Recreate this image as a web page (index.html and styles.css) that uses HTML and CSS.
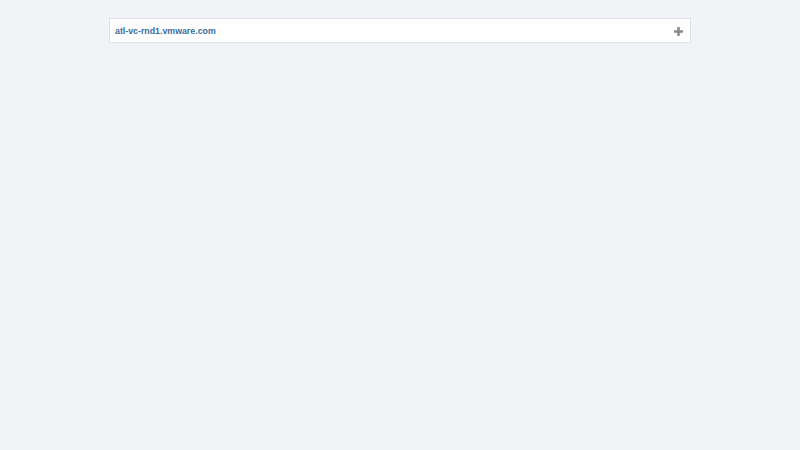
FILE: index.html
```html
<!DOCTYPE html>
<html>
<head>
<meta charset="utf-8">
<link rel="stylesheet" href="styles.css">
</head>
<body>
<div class="page">
  <div class="panel">
    <a class="title">atl-vc-rnd1.vmware.com</a>
    <span class="plus"><svg width="9" height="9" viewBox="0 0 9 9"><rect x="3.2" y="0" width="2.6" height="9" fill="#8a8d90"/><rect x="0" y="3.2" width="9" height="2.6" fill="#8a8d90"/></svg></span>
  </div>
</div>
</body>
</html>
```

FILE: styles.css
```css
html, body {
  margin: 0;
  padding: 0;
  background: #f1f3f6;
  font-family: "Liberation Sans", Arial, sans-serif;
}
.page {
  width: 582px;
  margin: 0 auto;
  padding-top: 18px;
}
.panel {
  box-sizing: border-box;
  height: 25px;
  background: #ffffff;
  border: 1px solid #dde2e8;
  display: flex;
  align-items: center;
  justify-content: space-between;
  padding: 0 7px 0 5px;
}
.title {
  color: #3a6d9c;
  font-size: 8.8px;
  font-weight: bold;
}
.plus {
  display: flex;
  align-items: center;
  margin-top: 1px;
}
```
